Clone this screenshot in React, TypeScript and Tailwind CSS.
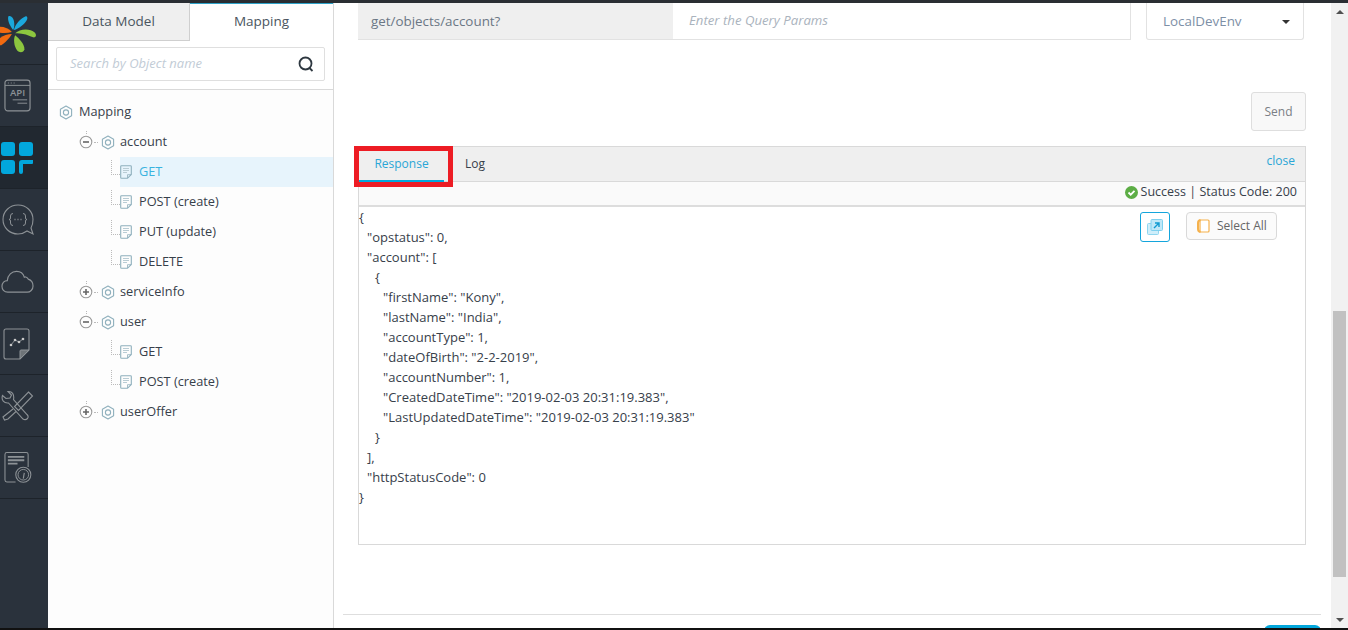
const font = { fontFamily: '"Open Sans", sans-serif' }

function Hex() {
  return (
    <svg width="14" height="15" viewBox="0 0 14 15" fill="none" stroke="#8fb0bd" strokeWidth="1.1">
      <path d="M7 1 L12.6 4.2 V10.8 L7 14 L1.4 10.8 V4.2 Z" strokeLinejoin="round" />
      <circle cx="7" cy="7.5" r="2.6" />
    </svg>
  )
}

function FileIcon() {
  return (
    <svg width="12" height="14" viewBox="0 0 12 14" fill="none">
      <path d="M1.5 .7 H10.5 Q11.3 .7 11.3 1.5 V9.5 L7.5 13.3 H1.5 Q.7 13.3 .7 12.5 V1.5 Q.7 .7 1.5 .7 Z" stroke="#8fb0bd" strokeWidth="1.1" />
      <path d="M3 3.5 H9 M3 5.5 H9 M3 7.5 H7" stroke="#b9ccd4" strokeWidth="1.2" />
      <path d="M7.5 13 V9.7 H11" stroke="#8fb0bd" strokeWidth=".8" />
    </svg>
  )
}

function Toggle({ open }: { open: boolean }) {
  return (
    <span className="relative flex w-[14px] h-[14px] items-center justify-center">
      <span className="absolute left-[7px] top-[-4px] h-[3px] border-l border-dotted border-[#bbb]" />
      <svg width="14" height="14" viewBox="0 0 14 14" fill="none">
        <circle cx="7" cy="7" r="5.8" stroke="#9a9a9a" strokeWidth="1.1" />
        <path d={open ? "M4 7 H10" : "M4 7 H10 M7 4 V10"} stroke="#666" strokeWidth="1.6" />
      </svg>
    </span>
  )
}

function ObjectRow({ name, open }: { name: string; open: boolean }) {
  return (
    <div className="flex items-center h-[30px] pl-[31px]">
      <Toggle open={open} />
      <span className="w-[4px] ml-[1px] mr-[3px] border-t border-dotted border-[#bbb]" />
      <Hex />
      <span className="ml-[5px] text-[#37404a]">{name}</span>
    </div>
  )
}

function MethodRow({ name, active }: { name: string; active?: boolean }) {
  return (
    <div className="flex items-center h-[30px] pl-[63px]">
      <span className="w-[9px] h-[15px] mb-[10px] border-l border-b border-dotted border-[#bbb]" />
      <span className={active ? "flex flex-1 items-center h-[30px] bg-[#e7f4fc]" : "flex flex-1 items-center h-[30px]"}>
        <FileIcon />
        <span className={active ? "ml-[7px] text-[#39b3df]" : "ml-[7px] text-[#37404a]"}>{name}</span>
      </span>
    </div>
  )
}

function Rail() {
  const stroke = "#8d9296"
  return (
    <div className="w-[48px] shrink-0 bg-[#2a323c] flex flex-col overflow-hidden">
      <div className="h-[62px] flex items-center border-b border-[#1d232a]">
        <svg width="37" height="40" viewBox="0 40 112 120">
          <path d="M25 47 C32 42 40 50 42 60 C44 70 44 80 40 88 C32 78 22 62 25 47 Z" fill="#1ba8dc" />
          <path d="M42 88 C46 70 62 52 78 46 C84 46 84 54 80 60 C72 72 58 84 42 88 Z" fill="#1ba8dc" />
          <path d="M46 98 C60 84 90 82 106 96 C112 104 108 112 100 110 C86 104 66 96 46 98 Z" fill="#8cc63f" />
          <path d="M46 104 C56 112 74 130 74 146 C72 156 60 158 52 150 C42 136 40 116 46 104 Z" fill="#8cc63f" />
          <path d="M0 78 C14 78 28 84 36 94 C24 98 10 98 0 96 Z" fill="#f26a10" />
          <path d="M36 100 C28 114 14 128 4 134 L0 134 L0 112 C10 104 24 100 36 100 Z" fill="#f26a10" />
        </svg>
      </div>
      <div className="h-[62px] flex items-center pl-[4px] border-b border-[#1d232a]">
        <svg width="27" height="33" viewBox="0 0 28 34" fill="none" stroke={stroke}>
          <rect x="1" y="1" width="26" height="32" rx="3" strokeWidth="1.2" />
          <path d="M1 6.5 H27" strokeWidth="1" />
          <path d="M4 4 H5 M7 4 H8 M10 4 H11" strokeWidth="1.2" />
          <text x="14" y="18" textAnchor="middle" fontSize="10" fontWeight="600" fill={stroke} stroke="none" fontFamily="Open Sans">API</text>
          <path d="M9 21.5 H24 M14 25 H24" strokeWidth="1" />
        </svg>
      </div>
      <div className="h-[62px] flex items-center pl-[1px] pt-[1px] bg-[#212830] border-b border-[#1d232a]">
        <svg width="33" height="33" viewBox="0 0 33 33" fill="#02a7dc">
          <rect x="0" y="0" width="14" height="14" rx="3" />
          <rect x="18" y="0" width="14" height="14" rx="3" />
          <rect x="0" y="18" width="14" height="14" rx="3" />
          <path d="M18 21 Q18 18 21 18 H32 V21 Q32 22 31 22 H22 V30 Q22 32 20 32 Q18 32 18 30 Z" />
        </svg>
      </div>
      <div className="h-[62px] flex items-center pl-[2px] border-b border-[#1d232a]">
        <svg width="32" height="32" viewBox="0 0 32 32" fill="none" stroke={stroke}>
          <path d="M16 1 C7.5 1 1 7.5 1 15.5 C1 23.5 7.5 30 16 30 C20 30 23 28.5 25 27 L31 30 L29 24 C30.5 21.5 31 18.5 31 15.5 C31 7.5 24.5 1 16 1 Z" strokeWidth="1.1" />
          <path d="M11 9.5 Q8.5 9.5 8.5 12 V14 Q8.5 15.5 7 15.5 Q8.5 15.5 8.5 17 V19 Q8.5 21.5 11 21.5 M21 9.5 Q23.5 9.5 23.5 12 V14 Q23.5 15.5 25 15.5 Q23.5 15.5 23.5 17 V19 Q23.5 21.5 21 21.5" strokeWidth="1" />
          <path d="M12.5 15.5 H13.5 M15.5 15.5 H16.5 M18.5 15.5 H19.5" strokeWidth="1.3" />
        </svg>
      </div>
      <div className="h-[62px] flex items-center pl-[1px] border-b border-[#1d232a]">
        <svg width="33" height="24" viewBox="0 0 34 24" fill="none" stroke={stroke} strokeWidth="1.2">
          <path d="M7 22.5 C3 22.5 1 19.5 1 16.5 C1 13 3.5 10.5 6.5 10.5 C7 5 11 1 16 1 C20 1 23 3.5 24 7 C25 6.5 27 7 28 9 C31 10 33 13 33 16 C33 20 30 22.5 27 22.5 Z" />
        </svg>
      </div>
      <div className="h-[62px] flex items-center pl-[3px] border-b border-[#1d232a]">
        <svg width="27" height="32" viewBox="0 0 27 32" fill="none" stroke={stroke}>
          <path d="M17 31 H3 Q1 31 1 29 V3 Q1 1 3 1 H24 Q26 1 26 3 V22 Z" strokeWidth="1.1" />
          <path d="M17 31 V23 Q17 22 18 22 H26 Z" fill="#6e7478" strokeWidth="1" />
          <path d="M8 17 L12 12 L16 14 L20 11" strokeWidth="1" />
          <circle cx="8" cy="17" r="1.3" fill="#c8c8c8" stroke="none" />
          <circle cx="12" cy="12" r="1.3" fill="#c8c8c8" stroke="none" />
          <circle cx="16" cy="14" r="1.3" fill="#c8c8c8" stroke="none" />
          <circle cx="20" cy="11" r="1.3" fill="#c8c8c8" stroke="none" />
        </svg>
      </div>
      <div className="h-[62px] flex items-center pl-[1px] border-b border-[#1d232a]">
        <svg width="33" height="31" viewBox="0 0 33 31" fill="none" stroke={stroke} strokeWidth="1.1">
          <path d="M7 1.5 L10.5 5 L9 8 L5 8.5 L1.5 5.5 C0 10 3 13.5 7.5 13 L22 29 Q24.5 30.5 26.5 28.5 Q28 26.5 26 24.5 L12.5 9.5 C13.5 4.5 11 1 7 1.5 Z" />
          <path d="M27.5 2 L31.5 6 L17.5 20.5 L13.5 16.5 Z" />
          <path d="M12 19 L2 27 L3.5 30 L7 29 L15 21.5" />
        </svg>
      </div>
      <div className="h-[62px] flex items-center pl-[4px] border-b border-[#1d232a]">
        <svg width="28" height="33" viewBox="0 0 29 33" fill="none" stroke={stroke}>
          <path d="M12 31.5 H3 Q1 31.5 1 29.5 V3 Q1 1 3 1 H23 Q25 1 25 3 V16" strokeWidth="1.1" />
          <path d="M4 5.5 H21 M4 9 H21 M4 12.5 H14" strokeWidth="2" />
          <circle cx="20" cy="24" r="7.8" strokeWidth="1.1" />
          <circle cx="20" cy="24" r="5.5" strokeWidth="1" />
          <path d="M20 28 L21 22" strokeWidth="1.2" />
        </svg>
      </div>
    </div>
  )
}

function TreePanel() {
  return (
    <div className="w-[286px] shrink-0 bg-[#fdfdfd] border-r border-[#d9d9d9] text-[12.75px]">
      <div className="flex h-[38px] text-[13.5px] text-[#4a5560]">
        <div className="w-[142px] flex items-center justify-center bg-[#efefef] border-r border-b border-[#cfcfcf]">Data Model</div>
        <div className="flex-1 flex items-center justify-center bg-white border-t border-[#2ea3c9] pb-[2px]">Mapping</div>
      </div>
      <div className="h-[49px] bg-white border-b border-[#d9d9d9] px-[8px] pt-[6px]">
        <div className="flex items-center justify-between h-[34px] border border-[#dfdfdf] rounded-[2px] pl-[13px] pr-[10px]">
          <span className="italic text-[13px] text-[#c2ccd6]">Search by Object name</span>
          <svg width="16" height="16" viewBox="0 0 16 16" fill="none" stroke="#2e3840" strokeWidth="1.8">
            <circle cx="7.5" cy="7.5" r="6" />
            <path d="M11.5 12 L14.5 15" />
          </svg>
        </div>
      </div>
      <div className="pt-[7px]">
        <div className="flex items-center h-[30px] pl-[11px]">
          <Hex />
          <span className="ml-[6px] text-[#37404a]">Mapping</span>
        </div>
        <ObjectRow name="account" open />
        <MethodRow name="GET" active />
        <MethodRow name="POST (create)" />
        <MethodRow name="PUT (update)" />
        <MethodRow name="DELETE" />
        <ObjectRow name="serviceInfo" open={false} />
        <ObjectRow name="user" open />
        <MethodRow name="GET" />
        <MethodRow name="POST (create)" />
        <ObjectRow name="userOffer" open={false} />
      </div>
    </div>
  )
}

const jsonLines: [number, string][] = [
  [0, "{"],
  [1, '"opstatus": 0,'],
  [1, '"account": ['],
  [2, "{"],
  [3, '"firstName": "Kony",'],
  [3, '"lastName": "India",'],
  [3, '"accountType": 1,'],
  [3, '"dateOfBirth": "2-2-2019",'],
  [3, '"accountNumber": 1,'],
  [3, '"CreatedDateTime": "2019-02-03 20:31:19.383",'],
  [3, '"LastUpdatedDateTime": "2019-02-03 20:31:19.383"'],
  [2, "}"],
  [1, "],"],
  [1, '"httpStatusCode": 0'],
  [0, "}"],
]

function ResponsePanel() {
  return (
    <div className="shrink-0 ml-[24px] mr-[25px] mt-[15px] border border-[#d9d9d9] text-[12px] text-[#37404a]">
      <div className="flex justify-between h-[35px] bg-[#efefef] border-b border-[#d9d9d9]">
        <div className="flex">
          <div className="w-[85px] h-[35px] flex items-center justify-center text-[#2aa6d6] border-b-2 border-[#02a7dc]">Response</div>
          <div className="ml-[21px] flex items-center">Log</div>
        </div>
        <span className="mr-[10px] mt-[5px] text-[#2aa6d6]">close</span>
      </div>
      <div className="flex items-center justify-end h-[25px] bg-[#fafafa] border-b-2 border-[#dddddd] pr-[8px] pb-[2px] text-[12.5px]">
        <svg width="13" height="13" viewBox="0 0 13 13" className="mr-[3px]">
          <circle cx="6.5" cy="6.5" r="6.5" fill="#5cad45" />
          <path d="M3.5 6.5 L5.7 8.7 L9.5 4.8" fill="none" stroke="#fff" strokeWidth="1.8" />
        </svg>
        <span>Success | Status Code: 200</span>
      </div>
      <div className="relative h-[337px] text-[13px]">
        <div className="leading-[20px]">
          {jsonLines.map(([level, text], i) => (
            <div key={i} className={level === 0 ? "whitespace-pre" : level === 1 ? "whitespace-pre pl-[8px]" : level === 2 ? "whitespace-pre pl-[16px]" : "whitespace-pre pl-[24px]"}>
              {text}
            </div>
          ))}
        </div>
        <div className="absolute top-[5px] right-[28px] flex items-start">
          <button className="flex items-center justify-center w-[30px] h-[30px] mr-[16px] border border-[#14a5dc] rounded-[3px] bg-white">
            <svg width="16" height="16" viewBox="0 0 16 16">
              <rect x="0.5" y="4.5" width="11" height="11" rx="1" fill="#cfeefa" stroke="#8fd6f0" />
              <rect x="4" y="0.5" width="11.5" height="11" rx="1" fill="#bfe8f8" stroke="#7fd0ee" />
              <path d="M7 9 L11.5 4.5 M8 4 H12 V8" stroke="#0f9ad1" strokeWidth="1.4" fill="none" />
            </svg>
          </button>
          <button className="flex items-center h-[28px] w-[91px] pl-[10px] border border-[#d9d9d9] rounded-[4px] bg-[#fbfbfb] text-[12px] text-[#666]">
            <svg width="13" height="14" viewBox="0 0 13 14" fill="none" className="mr-[7px]">
              <path d="M3 1 H11 Q12 1 12 2 V12 Q12 13 11 13 H3 Z" stroke="#f5b14c" strokeWidth="1.2" fill="#fff" />
              <path d="M3.5 1 Q1 1.5 1 4 V10 Q1 12.5 3.5 13" stroke="#f5b14c" strokeWidth="2" />
            </svg>
            Select All
          </button>
        </div>
      </div>
    </div>
  )
}

export default function App() {
  return (
    <div style={font} className="relative h-[630px] w-[1348px] overflow-hidden bg-white flex flex-col">
      <div className="h-[3px] shrink-0 bg-[#2a2e33]" />
      <div className="flex flex-1 min-h-0">
        <Rail />
        <TreePanel />
        <div className="flex-1 flex flex-col min-w-0 overflow-hidden">
          <div className="flex shrink-0 h-[37px] ml-[24px] mr-[27px] text-[13.4px]">
            <div className="w-[315px] flex items-center pl-[13px] bg-[#efefef] border-b border-[#e2e2e2] text-[#6b7785]">get/objects/account?</div>
            <div className="w-[458px] flex items-center pl-[16px] border border-t-0 border-l-0 border-[#e2e2e2] italic text-[13.2px] text-[#aab3bd]">Enter the Query Params</div>
            <div className="ml-[15px] w-[158px] flex items-center justify-between pl-[16px] pr-[13px] border border-t-0 border-[#e2e2e2] rounded-b-[3px] text-[#7d8fa6]">
              LocalDevEnv
              <span className="w-0 h-0 mt-[1px] border-x-[4px] border-x-transparent border-t-[4px] border-t-[#333]" />
            </div>
          </div>
          <div className="flex shrink-0 justify-end mt-[52px] mr-[25px]">
            <button className="w-[55px] h-[39px] border border-[#dedede] rounded-[3px] bg-[#f8f8f8] text-[12px] text-[#7a7f85]">Send</button>
          </div>
          <ResponsePanel />
          <div className="shrink-0 mt-[69px] ml-[9px] mr-[10px] border-t border-[#dedede] flex justify-end">
            <div className="mt-[10px] w-[57px] h-[20px] rounded-t-[6px] bg-[#02a7dc]" />
          </div>
        </div>
        <div className="w-[17px] shrink-0 bg-[#f1f1f1] flex flex-col items-center justify-between pt-[7px] pb-[6px] relative">
          <span className="w-0 h-0 border-x-[4px] border-x-transparent border-b-[4px] border-b-[#505050]" />
          <div className="absolute left-[2px] right-[2px] top-[308px] h-[266px] bg-[#c1c1c1]" />
          <span className="w-0 h-0 border-x-[4px] border-x-transparent border-t-[4px] border-t-[#505050]" />
        </div>
      </div>
      <div className="h-[2px] shrink-0 bg-[#111]" />
      <div className="absolute left-[354px] top-[146px] w-[99px] h-[41px] border-[5px] border-[#ed1c24]" />
    </div>
  )
}
